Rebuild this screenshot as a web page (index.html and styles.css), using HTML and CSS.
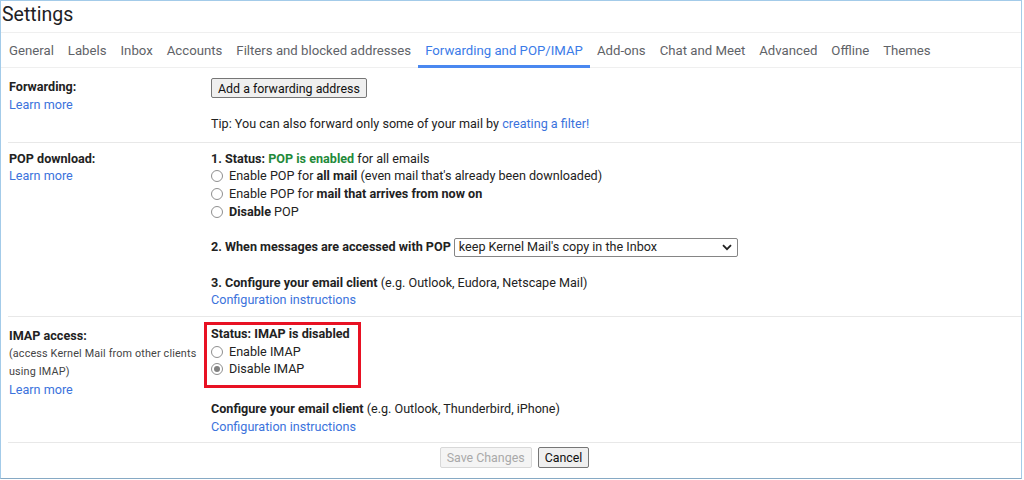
FILE: index.html
```html
<!DOCTYPE html>
<html>
<head>
<meta charset="utf-8">
<link rel="stylesheet" href="styles.css">
</head>
<body>
<div class="frame">
  <div class="title">Settings</div>
  <nav class="tabs">
    <span class="tab">General</span>
    <span class="tab">Labels</span>
    <span class="tab">Inbox</span>
    <span class="tab">Accounts</span>
    <span class="tab">Filters and blocked addresses</span>
    <span class="tab active">Forwarding and POP/IMAP</span>
    <span class="tab">Add-ons</span>
    <span class="tab">Chat and Meet</span>
    <span class="tab">Advanced</span>
    <span class="tab">Offline</span>
    <span class="tab">Themes</span>
  </nav>

  <div class="section s-forward">
    <div class="label">
      <div class="ltitle">Forwarding:</div>
      <a class="link">Learn more</a>
    </div>
    <div class="content">
      <button class="btn">Add a forwarding address</button>
      <div class="tip">Tip: You can also forward only some of your mail by <a class="link">creating a filter!</a></div>
    </div>
  </div>

  <div class="section s-pop">
    <div class="label">
      <div class="ltitle">POP download:</div>
      <a class="link">Learn more</a>
    </div>
    <div class="content">
      <div><b>1. Status: </b><b class="green">POP is enabled</b> for all emails</div>
      <label class="opt"><span class="radio"></span>Enable POP for <b>all mail</b> (even mail that's already been downloaded)</label>
      <label class="opt"><span class="radio"></span>Enable POP for <b>mail that arrives from now on</b></label>
      <label class="opt"><span class="radio"></span><b>Disable</b> POP</label>
      <div class="step2"><b>2. When messages are accessed with POP</b>
        <span class="select">keep Kernel Mail's copy in the Inbox
          <svg class="chev" width="10" height="7" viewBox="0 0 10 7"><path d="M1 1.2 L5 5.2 L9 1.2" fill="none" stroke="#222" stroke-width="1.8"/></svg>
        </span>
      </div>
      <div class="step3"><b>3. Configure your email client</b> (e.g. Outlook, Eudora, Netscape Mail)</div>
      <a class="link">Configuration instructions</a>
    </div>
  </div>

  <div class="section s-imap">
    <div class="label">
      <div class="ltitle">IMAP access:</div>
      <div class="small">(access Kernel Mail from other clients</div>
      <div class="small">using IMAP)</div>
      <a class="link">Learn more</a>
    </div>
    <div class="content">
      <div class="highlight">
        <div><b>Status: IMAP is disabled</b></div>
        <label class="opt"><span class="radio"></span>Enable IMAP</label>
        <label class="opt"><span class="radio checked"></span>Disable IMAP</label>
      </div>
      <div class="step-conf"><b>Configure your email client</b> (e.g. Outlook, Thunderbird, iPhone)</div>
      <a class="link">Configuration instructions</a>
    </div>
  </div>

  <div class="actions">
    <button class="btn disabled">Save Changes</button>
    <button class="btn">Cancel</button>
  </div>
</div>
</body>
</html>
```

FILE: styles.css
```css
html, body {
  margin: 0;
  padding: 0;
  background: #fff;
}
.frame {
  box-sizing: border-box;
  width: 1022px;
  height: 479px;
  border: 1px solid #a3cbe9;
  border-bottom-color: #86a9c4;
  font-family: Roboto, "Liberation Sans", sans-serif;
  font-size: 12.6px;
  color: #222;
  overflow: hidden;
}
.title {
  height: 32px;
  box-sizing: border-box;
  padding: 1px 0 0 1px;
  font-size: 19.5px;
  line-height: 26px;
  color: #202124;
  border-bottom: 1px solid #efefef;
}
.tabs {
  display: flex;
  height: 35px;
  box-sizing: border-box;
  padding-left: 1px;
  border-bottom: 1px solid #efefef;
}
.tab {
  padding: 10px 7px 0;
  font-size: 13.2px;
  color: #5f6368;
  box-sizing: border-box;
  height: 34px;
}
.tab.active {
  color: #3b7be8;
  border-bottom: 3px solid #4a88f0;
  height: 35px;
  margin-bottom: -1px;
}
.section {
  display: flex;
  margin-left: 7px;
  border-bottom: 1px solid #e8e8e8;
  line-height: 17.7px;
}
.label {
  width: 203px;
  flex: none;
  padding-left: 1px;
  box-sizing: border-box;
}
.ltitle {
  font-weight: 700;
}
.content {
  flex: 1;
  display: flex;
  flex-direction: column;
  align-items: flex-start;
}
.link {
  color: #3b73dc;
  text-decoration: none;
}
.green {
  color: #1f8a3a;
}
b {
  font-weight: 700;
}
.small {
  font-size: 10.8px;
  line-height: 18.3px;
  color: #444;
  letter-spacing: 0.15px;
}
.s-forward {
  padding: 10px 0 9px;
}
.tip {
  margin-top: 17px;
}
.s-pop {
  padding: 7px 0 7px;
}
.s-imap {
  padding: 10px 0 7px;
}
.opt {
  display: block;
}
.radio {
  display: inline-block;
  vertical-align: -2px;
  box-sizing: border-box;
  width: 12px;
  height: 12px;
  border: 1px solid #8f8f8f;
  border-radius: 50%;
  margin: 0 6px 0 0;
  background: #fff;
  position: relative;
}
.radio.checked::after {
  content: "";
  position: absolute;
  left: 2px;
  top: 2px;
  width: 6px;
  height: 6px;
  border-radius: 50%;
  background: #808080;
}
.step2 {
  margin-top: 17px;
  display: flex;
  align-items: center;
}
.select {
  display: inline-flex;
  align-items: center;
  justify-content: space-between;
  box-sizing: border-box;
  width: 284px;
  height: 19px;
  margin-left: 3px;
  padding: 0 5px 0 4px;
  border: 1px solid #858585;
  border-radius: 2px;
}
.step3 {
  margin-top: 17px;
}
.highlight {
  box-sizing: border-box;
  width: 157px;
  border: 3px solid #e81123;
  padding: 0 0 7px 4px;
  margin: -5px 0 0 -7px;
}
.step-conf {
  margin-top: 12px;
}
.btn {
  font-family: Roboto, "Liberation Sans", sans-serif;
  font-size: 12.4px;
  color: #111;
  background: #efefef;
  border: 1px solid #767676;
  border-radius: 2px;
  height: 20px;
  padding: 0 6px;
  line-height: 17px;
}
.btn.disabled {
  color: #a9a9a9;
  border-color: #d8d8d8;
  background: #f4f4f4;
}
.actions {
  display: flex;
  justify-content: center;
  gap: 6px;
  margin-left: 7px;
  padding-top: 4px;
}
.actions .btn {
  height: 21px;
}
```
